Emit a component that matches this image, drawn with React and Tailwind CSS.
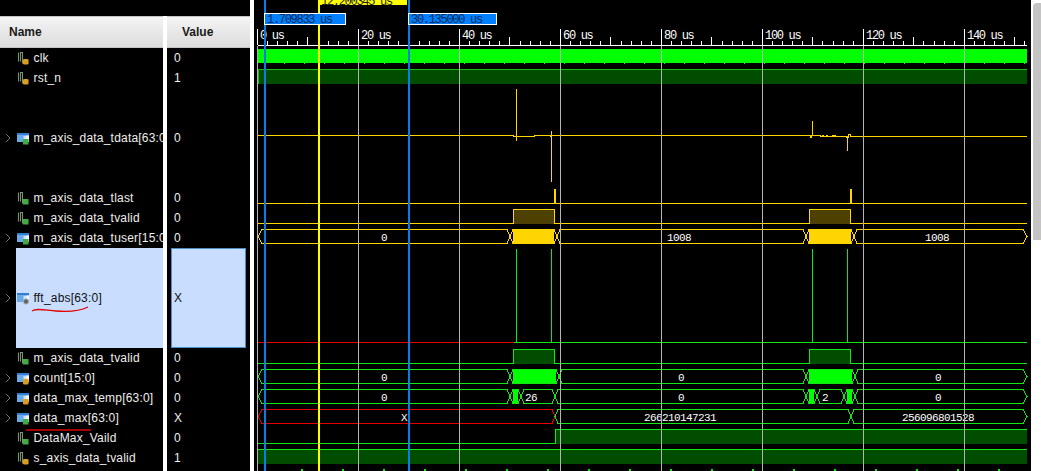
import React from 'react';

const GREEN = '#14e614';
const FILL = '#00ff00';
const DARK = '#004d00';
const YELLOW = '#ffd500';
const RED = '#e60000';
const BLUE = '#0a7ce6';
const LEFT = 258;
const RIGHT = 1027;
const ORIGIN = 257;
const PX_PER_US = 5.049;

const signals = [
    { name: 'clk', value: '0', icon: 'scalar', badge: 'lock' },
    { name: 'rst_n', value: '1', icon: 'scalar', badge: 'lock' },
    { name: 'm_axis_data_tdata[63:0]', value: '0', icon: 'bus', badge: 'green', tall: true, expand: true },
    { name: 'm_axis_data_tlast', value: '0', icon: 'scalar', badge: 'green' },
    { name: 'm_axis_data_tvalid', value: '0', icon: 'scalar', badge: 'green' },
    { name: 'm_axis_data_tuser[15:0]', value: '0', icon: 'bus', badge: 'green', expand: true },
    { name: 'fft_abs[63:0]', value: 'X', icon: 'bus', badge: 'gear', tall: true, expand: true, selected: true },
    { name: 'm_axis_data_tvalid', value: '0', icon: 'scalar', badge: 'green' },
    { name: 'count[15:0]', value: '0', icon: 'bus', badge: 'lock', expand: true },
    { name: 'data_max_temp[63:0]', value: '0', icon: 'bus', badge: 'lock', expand: true },
    { name: 'data_max[63:0]', value: 'X', icon: 'bus', badge: 'green', expand: true },
    { name: 'DataMax_Vaild', value: '0', icon: 'scalar', badge: 'green' },
    { name: 's_axis_data_tvalid', value: '1', icon: 'scalar', badge: 'lock' },
];

const Badge = ({ type }) => {
    if (type === 'gear') return <circle cx="9" cy="10.5" r="2.7" fill="#666" stroke="#bbb" strokeWidth="0.8" />;
    if (type === 'lock') return <rect x="6" y="8" width="5.5" height="5.5" rx="1.2" fill="#dc9c1e" />;
    return <rect x="6" y="8" width="5.5" height="5.5" fill="#43ab43" />;
};

const SignalIcon = ({ icon, badge }) => (
    <svg width="13" height="14" viewBox="0 0 13 14" className="shrink-0">
        {icon === 'scalar' ? (
            <path d="M1.5 1.5V10.5M3.5 10.5V1.5H5.5V12H9" fill="none" stroke="#7b9470" strokeWidth="1.1" />
        ) : (
            <>
                <rect x="0" y="2" width="12" height="9" fill="#cfe2f4" />
                <rect x="0" y="2" width="12" height="2.5" fill="#2f80d4" />
                <rect x="0" y="4.5" width="6.5" height="6.5" fill="#67abe8" />
                <rect x="9.5" y="4.5" width="2.5" height="3.5" fill="#f4f8fc" />
            </>
        )}
        <Badge type={badge} />
    </svg>
);

const SignalName = ({ signal }) => (
    <div className={`flex items-center shrink-0 ${signal.tall ? 'h-[100px]' : 'h-5'}`}>
        <div className="w-4 flex justify-center shrink-0">
            {signal.expand && (
                <svg width="6" height="10" viewBox="0 0 6 10">
                    <path d="M1 1L5 5L1 9" fill="none" stroke="#777" strokeWidth="1" />
                </svg>
            )}
        </div>
        <div className={`h-full flex-1 flex items-center gap-[3.5px] pl-[1px] whitespace-nowrap overflow-hidden tracking-[0.2px] ${signal.selected ? 'bg-[#c8ddff] text-[#111]' : 'text-[#eeeeee]'}`}>
            <SignalIcon icon={signal.icon} badge={signal.badge} />
            <span>{signal.name}</span>
        </div>
    </div>
);

const SignalValue = ({ signal }) => (
    <div className={`flex items-center shrink-0 ${signal.tall ? 'h-[100px]' : 'h-5'}`}>
        {signal.selected ? (
            <div className="mx-1 h-full flex-1 flex items-center pl-[2px] bg-[#c8ddff] border border-[#4a8fc9] text-[#111]">{signal.value}</div>
        ) : (
            <span className="pl-[7px] text-[#eeeeee]">{signal.value}</span>
        )}
    </div>
);

const Header = ({ children, className }) => (
    <div className={`h-8 shrink-0 flex items-center font-bold text-[#1a1a1a] bg-gradient-to-b from-[#f4f4f4] to-[#dcdcdc] border-y border-[#c4c4c4] ${className}`}>
        {children}
    </div>
);

const usToX = (us) => Math.round(ORIGIN + us * PX_PER_US) + 0.5;

const Ruler = () => {
    const ticks = [];
    for (let us = 0; us <= 152; us += 2) {
        const x = usToX(us);
        const top = us % 20 === 0 ? 29 : us % 10 === 0 ? 37 : 41;
        if (x <= RIGHT) ticks.push(<line key={us} x1={x} x2={x} y1={top} y2={45} stroke="#fff" />);
    }
    const labels = [0, 20, 40, 60, 80, 100, 120, 140];
    return (
        <g>
            <line x1={LEFT} x2={RIGHT} y1={45.5} y2={45.5} stroke="#fff" />
            {ticks}
            {labels.map((us) => (
                <text key={us} x={usToX(us) + 2.5} y={39} className="font-['Liberation_Mono'] text-[12px] tracking-[-1.3px] fill-white">
                    {us} us
                </text>
            ))}
        </g>
    );
};

const GridLines = () => (
    <g>
        {[0, 20, 40, 60, 80, 100, 120, 140].map((us) => {
            const x = usToX(us);
            return <line key={us} x1={x} x2={x} y1={46} y2={471} stroke="#b4b4b4" />;
        })}
    </g>
);

// one bus row, crossings is the list of x where the value changes
const Bus = ({ top, color = GREEN, colors, crossings, fills = [], labels = [] }) => {
    const bot = top + 14;
    const mid = top + 7;
    const stops = [LEFT + 4, ...crossings, RIGHT - 4];
    const colorOf = (i) => (colors ? colors[i] : color);
    return (
        <g fill="none">
            {fills.map(([a, b]) => (
                <rect key={a} x={a} y={top} width={b - a} height={14} fill={color === GREEN ? FILL : color} />
            ))}
            {stops.slice(0, -1).map((x, i) => {
                const from = i === 0 ? x : x + 3;
                const to = i === stops.length - 2 ? stops[i + 1] : stops[i + 1] - 3;
                return (
                    <path key={x} d={`M${from} ${top}H${to}M${from} ${bot}H${to}`} stroke={colorOf(i)} />
                );
            })}
            {crossings.map((x, i) => (
                <g key={x}>
                    <path d={`M${x - 3} ${top}L${x} ${mid}L${x - 3} ${bot}`} stroke={colorOf(i)} />
                    <path d={`M${x + 3} ${top}L${x} ${mid}L${x + 3} ${bot}`} stroke={colorOf(i + 1)} />
                </g>
            ))}
            <path d={`M${LEFT + 4} ${top}L${LEFT} ${mid}L${LEFT + 4} ${bot}`} stroke={colorOf(0)} />
            <path d={`M${RIGHT - 4} ${top}L${RIGHT} ${mid}L${RIGHT - 4} ${bot}`} stroke={colorOf(crossings.length)} />
            {labels.map(([x, text]) => (
                <text key={x} x={x} y={top + 11} textAnchor="middle" className="font-['Liberation_Mono'] text-[11px] tracking-[-0.6px] fill-white">
                    {text}
                </text>
            ))}
        </g>
    );
};

// scalar row with pulses, each pulse is [x0, x1]
const Pulses = ({ base, top, color, fill, pulses }) => {
    let d = `M${LEFT} ${base}`;
    pulses.forEach(([a, b]) => {
        d += `H${a}V${top}H${b}V${base}`;
    });
    d += `H${RIGHT}`;
    return (
        <g>
            {pulses.map(([a, b]) => (
                <rect key={a} x={a} y={top} width={b - a} height={base - top} fill={fill} />
            ))}
            <path d={d} fill="none" stroke={color} />
        </g>
    );
};

const Marker = ({ x, color }) => <rect x={x - 1} y={0} width={2} height={471} fill={color} />;

const Flag = ({ x, width, label }) => (
    <g>
        <rect x={x + 0.5} y={13.5} width={width} height={11} fill="#0080ff" stroke="#fff" />
        <text x={x + 3} y={23} className="font-['Liberation_Mono'] text-[12px] tracking-[-1.3px] fill-[#002a55]">
            {label}
        </text>
    </g>
);

const Waveform = () => {
    const bottomDots = [];
    for (let x = 301; x < RIGHT; x += 41) bottomDots.push(x);
    const clkDots = [];
    for (let x = 284; x < RIGHT; x += 20) clkDots.push(x);

    return (
        <svg width="777" height="471" viewBox="254 0 777 471" shapeRendering="crispEdges" className="block shrink-0 bg-black">
            <Ruler />

            {/* clk */}
            <rect x={LEFT} y={49} width={RIGHT - LEFT} height={14} fill={FILL} />
            {clkDots.map((x) => (
                <rect key={x} x={x} y={63} width={1} height={1} fill={FILL} />
            ))}

            {/* rst_n */}
            <rect x={LEFT} y={70} width={RIGHT - LEFT} height={14} fill={DARK} />
            <path d={`M${LEFT + 0.5} 84V69.5H${RIGHT}`} fill="none" stroke="#12c012" />

            {/* tdata */}
            <path
                d="M258 135.5H513V136.5H534V135.5H810V137H811.5V135.5H820V136.5H846V137.5H848V134.5H850V136.5H1027"
                fill="none"
                stroke={YELLOW}
            />
            <path d="M516.5 89V141M551.5 131V182M550 136H552M812.5 121V136M847.5 136V151M822 135.5H824M826 135.5H828M832 135.5H836" fill="none" stroke={YELLOW} />

            {/* tlast */}
            <path d={`M${LEFT} 203.5H${RIGHT}`} stroke={YELLOW} />
            <rect x={554} y={189} width={2} height={14} fill={YELLOW} />
            <rect x={850} y={189} width={2} height={14} fill={YELLOW} />

            {/* tvalid */}
            <Pulses base={223.5} top={209.5} color={YELLOW} fill="#4d4000" pulses={[[513.5, 554.5], [809.5, 850.5]]} />

            {/* tuser */}
            <Bus
                top={229.5}
                color={YELLOW}
                crossings={[510, 557, 806, 854]}
                fills={[[513, 554], [809, 851]]}
                labels={[[384, '0'], [679, '1008'], [937, '1008']]}
            />

            {/* fft_abs */}
            <path d="M258 342.5H514" stroke={RED} />
            <path d="M514 342.5H1027M516.5 249V342M551.5 249V342M812.5 249V342M847.5 249V342" fill="none" stroke={GREEN} />

            {/* second tvalid */}
            <Pulses base={363.5} top={349.5} color={GREEN} fill={DARK} pulses={[[513.5, 554.5], [809.5, 850.5]]} />

            {/* count */}
            <Bus
                top={369.5}
                crossings={[510, 559, 806, 855]}
                fills={[[513, 556], [809, 852]]}
                labels={[[384, '0'], [681, '0'], [938, '0']]}
            />

            {/* data_max_temp */}
            <Bus
                top={389.5}
                crossings={[510, 521, 555, 806, 817, 844, 855]}
                fills={[[513, 518], [809, 814], [847, 852]]}
                labels={[[384, '0'], [531, '26'], [681, '0'], [825, '2'], [938, '0']]}
            />

            {/* data_max */}
            <Bus
                top={409.5}
                colors={[RED, GREEN, GREEN]}
                crossings={[555, 851]}
                labels={[[404, 'X'], [680, '266210147231'], [938, '256096801528']]}
            />

            {/* DataMax_Vaild */}
            <rect x={555} y={430} width={RIGHT - 555} height={14} fill={DARK} />
            <path d={`M${LEFT} 443.5H555.5V429.5H${RIGHT}`} fill="none" stroke={GREEN} />

            {/* s_axis_data_tvalid */}
            <rect x={LEFT} y={450} width={RIGHT - LEFT} height={14} fill={DARK} />
            <path d={`M${LEFT} 449.5H${RIGHT}`} stroke={GREEN} />
            {bottomDots.map((x) => (
                <rect key={x} x={x} y={469} width={2} height={2} fill={GREEN} />
            ))}

            <GridLines />

            <Marker x={265} color={BLUE} />
            <Marker x={409} color={BLUE} />
            <Marker x={319} color="#ffff00" />

            <Flag x={264} width={81} label="1.709833 us" />
            <Flag x={408} width={88} label="30.135000 us" />
            <rect x={318} y={0} width={89} height={5} fill="#ffff00" />
            <svg x={318} y={0} width={89} height={5}>
                <text x={3} y={5} className="font-['Liberation_Mono'] text-[12px] tracking-[-1.3px] fill-[#222]">
                    12.200345 us
                </text>
            </svg>
        </svg>
    );
};

const App = () => {
    return (
        <div className="relative w-[1041px] h-[471px] flex bg-white overflow-hidden font-['Liberation_Sans',Arial,sans-serif] text-[12px]">
            <div className="w-[163px] shrink-0 h-full flex flex-col pt-4 bg-black overflow-hidden">
                <Header className="pl-[9px]">Name</Header>
                {signals.map((s, i) => (
                    <SignalName key={i} signal={s} />
                ))}
            </div>
            <div className="w-[83px] shrink-0 h-full ml-1 flex flex-col pt-4 bg-black overflow-hidden">
                <Header className="pl-[15px]">Value</Header>
                {signals.map((s, i) => (
                    <SignalValue key={i} signal={s} />
                ))}
            </div>
            <div className="w-1 shrink-0 h-full bg-white" />
            <Waveform />
            <div className="flex-1 h-full pt-[3px] pl-[2px] bg-white">
                <div className="h-[237px] bg-[#c4c4c4] rounded-tl-[4px]" />
            </div>

            {/* the white gap above the headers is black in the shot */}
            <div className="absolute left-[163px] top-0 w-1 h-4 bg-black" />

            {/* red pen marks on top of the names */}
            <svg className="absolute left-0 top-0 pointer-events-none" width="163" height="471">
                <path d="M32 311C36 308 44 310 56 311C68 312 80 311 88 307" fill="none" stroke="#e00000" strokeWidth="1.3" />
                <path d="M26 430H91" fill="none" stroke="#e00000" strokeWidth="1.5" />
            </svg>
        </div>
    );
};

export default App;
